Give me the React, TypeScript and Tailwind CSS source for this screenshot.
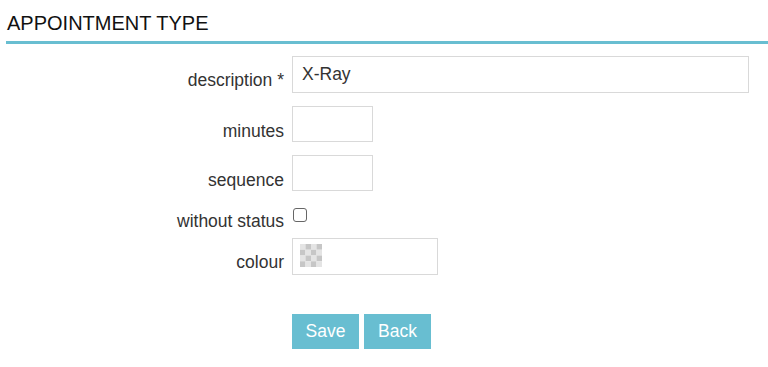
import React from 'react'

function Checker() {
  const cells = []
  for (let r = 0; r < 4; r++) {
    for (let c = 0; c < 4; c++) {
      cells.push(
        <rect
          key={`${r}-${c}`}
          x={c * 5.5}
          y={r * 5.5}
          width={5.5}
          height={5.5}
          fill={(r + c) % 2 === 0 ? '#e4e4e4' : '#c6c6c6'}
        />
      )
    }
  }
  return (
    <svg width="22" height="23" viewBox="0 0 22 22" preserveAspectRatio="none">
      {cells}
    </svg>
  )
}

export default function App() {
  return (
    <div className="min-h-screen bg-white text-[#333] font-['Liberation_Sans',Arial,sans-serif]">
      <div className="ml-[6px] pt-[9px] pb-[4px] border-b-[3px] border-[#68bed1]">
        <h2 className="pl-[1px] text-[20px] leading-[28px] text-[#111]">APPOINTMENT TYPE</h2>
      </div>

      <div className="flex flex-col text-[17.5px]">
        <div className="mt-[12px] flex items-end">
          <label className="w-[284px] text-right leading-[20px] pb-[3px]">description *</label>
          <input
            defaultValue="X-Ray"
            className="ml-[8px] w-[457px] h-[37px] border border-[#d9d9d9] px-[9px] text-[17.5px] text-[#333] outline-none"
          />
        </div>

        <div className="mt-[13px] flex items-end">
          <label className="w-[284px] text-right leading-[20px] pb-[1px]">minutes</label>
          <input className="ml-[8px] w-[81px] h-[36px] border border-[#d9d9d9] px-2 outline-none" />
        </div>

        <div className="mt-[13px] flex items-end">
          <label className="w-[284px] text-right leading-[20px] pb-[1px]">sequence</label>
          <input className="ml-[8px] w-[81px] h-[36px] border border-[#d9d9d9] px-2 outline-none" />
        </div>

        <div className="mt-[17px] flex items-start">
          <label className="w-[284px] text-right leading-[20px] pt-[3px]">without status</label>
          <span className="ml-[9px] w-[14px] h-[14px] rounded-[3px] border border-[#666] bg-white" />
        </div>

        <div className="mt-[7px] flex items-end">
          <label className="w-[284px] text-right leading-[20px] pb-[3px]">colour</label>
          <div className="ml-[8px] w-[146px] h-[37px] border border-[#d9d9d9] pl-[7px] pt-[5px]">
            <Checker />
          </div>
        </div>

        <div className="mt-[39px] ml-[292px] flex gap-[5px]">
          <button className="w-[67px] h-[35px] bg-[#68bed1] text-white text-[17.5px]">Save</button>
          <button className="w-[67px] h-[35px] bg-[#68bed1] text-white text-[17.5px]">Back</button>
        </div>
      </div>
    </div>
  )
}
